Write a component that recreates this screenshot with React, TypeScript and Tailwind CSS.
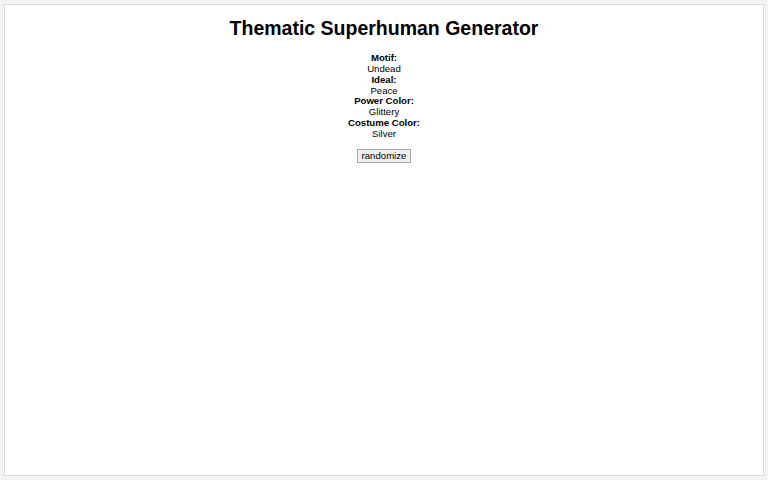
export default function App() {
  const rows = [
    { label: "Motif:", value: "Undead" },
    { label: "Ideal:", value: "Peace" },
    { label: "Power Color:", value: "Glittery" },
    { label: "Costume Color:", value: "Silver" },
  ]

  return (
    <div className="h-[480px] w-[768px] bg-[#f4f4f4] p-[4px] font-['Liberation_Sans',Arial,sans-serif] text-black">
      <div className="flex h-full w-full flex-col items-center border border-[#dcdcdc] bg-white">
        <h1 className="mt-[11px] text-[19.5px] font-bold leading-[24px]">Thematic Superhuman Generator</h1>
        <dl className="mt-[13px] flex flex-col items-center text-[9.6px] leading-[10.85px]">
          {rows.map((r) => (
            <div key={r.label} className="flex flex-col items-center">
              <dt className="font-bold">{r.label}</dt>
              <dd>{r.value}</dd>
            </div>
          ))}
        </dl>
        <button className="mt-[9px] h-[14px] border border-[#a8a8a8] bg-[#f0f0f0] px-[4px] text-[9.6px] leading-[12px]">
          randomize
        </button>
      </div>
    </div>
  )
}
